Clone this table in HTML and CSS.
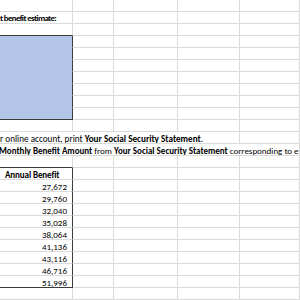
FILE: index.html
```html
<!DOCTYPE html>
<html>
<head>
<meta charset="utf-8">
<link rel="stylesheet" href="styles.css">
</head>
<body>
<div class="sheet">
  <!-- row 0 -->
  <div class="c"></div><div class="c"></div><div class="c"></div><div class="c"></div><div class="c"></div>
  <!-- row 1 -->
  <div class="c t label"><b>t benefit estimate:</b></div><div class="c"></div><div class="c"></div><div class="c"></div><div class="c"></div>
  <!-- row 2 -->
  <div class="c box-above"></div><div class="c"></div><div class="c"></div><div class="c"></div><div class="c"></div>
  <!-- rows 3-9 : input box -->
  <div class="c box"></div><div class="c"></div><div class="c"></div><div class="c"></div><div class="c"></div>
  <div class="c box"></div><div class="c"></div><div class="c"></div><div class="c"></div><div class="c"></div>
  <div class="c box"></div><div class="c"></div><div class="c"></div><div class="c"></div><div class="c"></div>
  <div class="c box"></div><div class="c"></div><div class="c"></div><div class="c"></div><div class="c"></div>
  <div class="c box"></div><div class="c"></div><div class="c"></div><div class="c"></div><div class="c"></div>
  <div class="c box"></div><div class="c"></div><div class="c"></div><div class="c"></div><div class="c"></div>
  <div class="c box box-last"></div><div class="c"></div><div class="c"></div><div class="c"></div><div class="c"></div>
  <!-- row 10 -->
  <div class="c"></div><div class="c"></div><div class="c"></div><div class="c"></div><div class="c"></div>
  <!-- row 11 -->
  <div class="c t note span4">r online account, print <b>Your Social Security Statement</b>.</div><div class="c"></div>
  <!-- row 12 -->
  <div class="c t note2 span5"><b>Monthly Benefit Amount</b> from <b>Your Social Security Statement</b> corresponding to e</div>
  <!-- row 13 -->
  <div class="c tbl-above"></div><div class="c"></div><div class="c"></div><div class="c"></div><div class="c"></div>
  <!-- row 14 header -->
  <div class="c t tbl head"><b>Annual Benefit</b></div><div class="c"></div><div class="c"></div><div class="c"></div><div class="c"></div>
  <!-- rows 15-23 values -->
  <div class="c t tbl num">27,672</div><div class="c"></div><div class="c"></div><div class="c"></div><div class="c"></div>
  <div class="c t tbl num">29,760</div><div class="c"></div><div class="c"></div><div class="c"></div><div class="c"></div>
  <div class="c t tbl num">32,040</div><div class="c"></div><div class="c"></div><div class="c"></div><div class="c"></div>
  <div class="c t tbl num">35,028</div><div class="c"></div><div class="c"></div><div class="c"></div><div class="c"></div>
  <div class="c t tbl num">38,064</div><div class="c"></div><div class="c"></div><div class="c"></div><div class="c"></div>
  <div class="c t tbl num">41,136</div><div class="c"></div><div class="c"></div><div class="c"></div><div class="c"></div>
  <div class="c t tbl num">43,116</div><div class="c"></div><div class="c"></div><div class="c"></div><div class="c"></div>
  <div class="c t tbl num">46,716</div><div class="c"></div><div class="c"></div><div class="c"></div><div class="c"></div>
  <div class="c t tbl num tbl-last">51,996</div><div class="c"></div><div class="c"></div><div class="c"></div><div class="c"></div>
  <!-- row 24 -->
  <div class="c"></div><div class="c"></div><div class="c"></div><div class="c"></div><div class="c"></div>
</div>
</body>
</html>
```
FILE: styles.css
```css
html, body {
  margin: 0;
  padding: 0;
  background: #ffffff;
  overflow: hidden;
}

.sheet {
  display: grid;
  grid-template-columns: 73px 41px 64px 62px 1fr;
  grid-auto-rows: 12px;
  width: 300px;
  height: 300px;
  font-family: "Carlito", "Lato", sans-serif;
  font-size: 9px;
  color: #000000;
}

.c {
  box-sizing: border-box;
  border-right: 1px solid #dadada;
  border-bottom: 1px solid #dadada;
  min-width: 0;
}

.t {
  line-height: 11px;
  white-space: nowrap;
  overflow: hidden;
  padding-top: 1px;
}

.t b {
  font-weight: 700;
}

.label {
  font-size: 8.8px;
  letter-spacing: -0.6px;
}

.note {
  font-size: 9.2px;
}

.note2 {
  font-size: 9px;
}

.span4 {
  grid-column: span 4;
}

.span5 {
  grid-column: span 5;
  margin-left: -1px;
}

.box-above {
  border-bottom-color: #3c3c3c;
}

.box {
  background: #b4c6e7;
  border-right-color: #3c3c3c;
  border-bottom-color: #b4c6e7;
}

.box-last {
  border-bottom-color: #3c3c3c;
}

.tbl-above {
  border-bottom-color: #3c3c3c;
}

.tbl {
  border-right-color: #3c3c3c;
}

.head {
  padding-left: 5px;
  letter-spacing: -0.1px;
}

.num {
  text-align: right;
  padding-right: 5px;
}

.tbl-last {
  border-bottom-color: #3c3c3c;
}
```
